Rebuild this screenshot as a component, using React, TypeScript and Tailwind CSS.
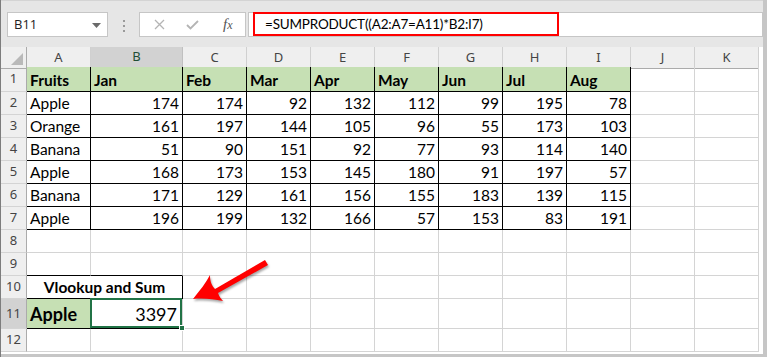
import React from 'react';

const COLS =
  'grid grid-cols-[26px_64px_92px_64px_64px_64px_64px_64px_64px_64px_64px_64px]';
const LETTERS = ['A', 'B', 'C', 'D', 'E', 'F', 'G', 'H', 'I', 'J', 'K'];
const HEAD = ['Fruits', 'Jan', 'Feb', 'Mar', 'Apr', 'May', 'Jun', 'Jul', 'Aug'];
const DATA: [string, ...number[]][] = [
  ['Apple', 174, 174, 92, 132, 112, 99, 195, 78],
  ['Orange', 161, 197, 144, 105, 96, 55, 173, 103],
  ['Banana', 51, 90, 151, 92, 77, 93, 114, 140],
  ['Apple', 168, 173, 153, 145, 180, 91, 197, 57],
  ['Banana', 171, 129, 161, 156, 155, 183, 139, 115],
  ['Apple', 196, 199, 132, 166, 57, 153, 83, 191],
];

const cellFont = "font-['Lato',sans-serif] text-[15.5px] text-black";

function RowHead({ n, active }: { n: number; active?: boolean }) {
  return (
    <div
      className={`flex items-center justify-center border-r border-b border-r-[#ababab] border-b-[#d4d4d4] font-['Noto_Sans',sans-serif] text-[13px] text-[#444] ${
        active ? 'bg-[#d2d2d2]' : 'bg-[#efefef]'
      }`}
    >
      {n}
    </div>
  );
}

function Cell({
  children,
  right,
  black,
  bottomBlack,
  className = '',
}: {
  children?: React.ReactNode;
  right?: boolean;
  black?: boolean;
  bottomBlack?: boolean;
  className?: string;
}) {
  return (
    <div
      className={`flex items-end px-[3px] pb-[1px] border-r border-b leading-[20px] whitespace-nowrap ${cellFont} ${
        black ? 'border-black' : 'border-[#d4d4d4]'
      } ${bottomBlack ? 'border-b-black' : ''} ${right ? 'justify-end' : ''} ${className}`}
    >
      {children}
    </div>
  );
}

function EmptyCells({ from, count }: { from: number; count: number }) {
  return (
    <>
      {Array.from({ length: count }).map((_, i) => (
        <Cell key={from + i} />
      ))}
    </>
  );
}

export default function App() {
  return (
    <div className="relative w-[767px] h-[357px] overflow-hidden bg-[#c6c6c6] border-l border-[#7d7d7d] pr-[4px] pb-[3px]">
      <div className="h-full bg-white flex flex-col">
        {/* formula bar */}
        <div className="h-[47px] shrink-0 bg-[#e6e6e6] border-t border-[#d4d4d4] flex items-start pt-[11px]">
          <div className="relative ml-[6px] w-[101px] h-[25px] bg-white border border-[#c6c6c6] flex items-center pl-[6px] font-['Open_Sans',sans-serif] text-[13px] text-[#222]">
            B11
            <svg className="absolute right-[6px] top-[10px]" width="9" height="5" viewBox="0 0 9 5">
              <path d="M0 0H9L4.5 5Z" fill="#6a6a6a" />
            </svg>
          </div>
          <div className="ml-[15px] mt-[8px] flex flex-col gap-[3px]">
            <span className="block w-[2px] h-[2px] bg-[#9a9a9a]" />
            <span className="block w-[2px] h-[2px] bg-[#9a9a9a]" />
            <span className="block w-[2px] h-[2px] bg-[#9a9a9a]" />
          </div>
          <div className="ml-[14px] w-[107px] h-[25px] bg-white border border-[#c6c6c6] flex items-center">
            <svg className="ml-[14px]" width="11" height="11" viewBox="0 0 11 11">
              <path d="M1 1L10 10M10 1L1 10" stroke="#b4b4b4" strokeWidth="1.3" />
            </svg>
            <svg className="ml-[21px]" width="13" height="10" viewBox="0 0 13 10">
              <path d="M1 5L4.5 8.5L12 1" fill="none" stroke="#b4b4b4" strokeWidth="1.8" />
            </svg>
            <span className="ml-[24px] font-['Liberation_Serif',serif] italic text-[15px] text-[#555] leading-none">
              f<span className="text-[12px]">x</span>
            </span>
          </div>
          <div className="relative ml-[2px] flex-1 h-[25px] bg-white border border-[#c6c6c6]">
            <div className="absolute left-[4px] -top-[1px] w-[306px] h-[24px] border-2 border-[#ff0000] flex items-center pl-[10px] font-['Lato',sans-serif] text-[13.5px] tracking-[-0.2px] text-black">
              =SUMPRODUCT((A2:A7=A11)*B2:I7)
            </div>
          </div>
        </div>

        {/* column headers */}
        <div className={`${COLS} h-[20px] shrink-0`}>
          <div className="relative bg-[#efefef] border-r border-b border-[#ababab]">
            <svg className="absolute right-[3px] bottom-[3px]" width="12" height="12" viewBox="0 0 12 12">
              <path d="M12 0V12H0Z" fill="#b9b9b9" />
            </svg>
          </div>
          {LETTERS.map((l) => (
            <div
              key={l}
              className={`flex items-center justify-center border-r font-['Noto_Sans',sans-serif] text-[13px] ${
                l === 'B'
                  ? 'bg-[#d2d2d2] border-r-[#c0c0c0] border-b-2 border-b-[#217346] text-[#1f4e36]'
                  : 'bg-[#efefef] border-r-[#d0d0d0] border-b border-b-[#ababab] text-[#444]'
              }`}
            >
              {l}
            </div>
          ))}
        </div>

        {/* row 1 */}
        <div className={`${COLS} h-[25px] shrink-0`}>
          <RowHead n={1} />
          {HEAD.map((h) => (
            <Cell key={h} black className="bg-[#c6e0b4] font-bold">
              {h}
            </Cell>
          ))}
          <EmptyCells from={9} count={2} />
        </div>

        {/* rows 2-7 */}
        {DATA.map((row, i) => (
          <div key={i} className={`${COLS} h-[23px] shrink-0`}>
            <RowHead n={i + 2} />
            {row.map((v, j) => (
              <Cell key={j} black right={j > 0}>
                {v}
              </Cell>
            ))}
            <EmptyCells from={9} count={2} />
          </div>
        ))}

        {/* row 8 */}
        <div className={`${COLS} h-[23px] shrink-0`}>
          <RowHead n={8} />
          <EmptyCells from={0} count={11} />
        </div>

        {/* row 9 */}
        <div className={`${COLS} h-[23px] shrink-0`}>
          <RowHead n={9} />
          <Cell bottomBlack />
          <Cell bottomBlack />
          <EmptyCells from={2} count={9} />
        </div>

        {/* row 10 */}
        <div className={`${COLS} h-[23px] shrink-0`}>
          <RowHead n={10} />
          <Cell black className="col-span-2 justify-center font-bold">
            Vlookup and Sum
          </Cell>
          <EmptyCells from={2} count={9} />
        </div>

        {/* row 11 */}
        <div className={`${COLS} h-[30px] shrink-0`}>
          <RowHead n={11} active />
          <Cell black className="bg-[#c6e0b4] font-bold !text-[18px] leading-[26px] border-r-[#217346]">
            Apple
          </Cell>
          <Cell right bottomBlack className="relative !text-[18px] leading-[26px] pr-[5px]">
            3397
            <div className="absolute -left-[1px] -top-[1px] -right-[0px] -bottom-[0px] border-2 border-[#217346]" />
            <div className="absolute -right-[3px] -bottom-[3px] w-[6px] h-[6px] bg-[#217346] border border-white" />
          </Cell>
          <EmptyCells from={2} count={9} />
        </div>

        {/* row 12 */}
        <div className={`${COLS} h-[23px] shrink-0`}>
          <RowHead n={12} />
          <EmptyCells from={0} count={11} />
        </div>
      </div>

      {/* red arrow */}
      <svg
        className="absolute left-0 top-0 pointer-events-none drop-shadow-[1px_2px_1px_rgba(0,0,0,0.35)]"
        width="767"
        height="357"
        viewBox="0 0 767 357"
      >
        <path
          d="M192 299 C199 290 205 283 209 275 C209 282 211 286 214 289 L264 260 L267 265 L217 293 C218 296 220 299 222 301 C212 299 202 298 192 299 Z"
          fill="#ff0000"
        />
      </svg>
    </div>
  );
}
